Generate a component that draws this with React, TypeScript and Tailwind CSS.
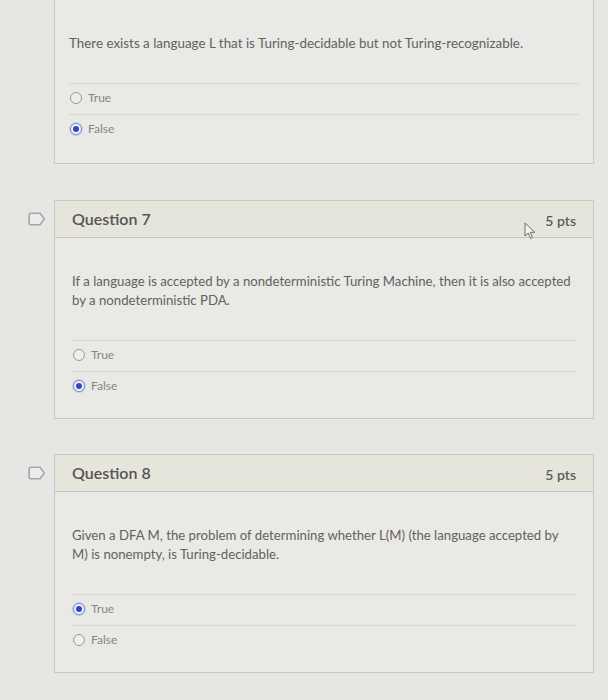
import React from "react";

function Radio({ checked }: { checked: boolean }) {
  return checked ? (
    <span className="inline-flex h-[12px] w-[12px] items-center justify-center rounded-full border border-[#7d8fd6] bg-[#f2f3f5] shadow-[0_0_0_1px_rgba(90,120,220,0.25)]">
      <span className="h-[6px] w-[6px] rounded-full bg-[#2b48c8]" />
    </span>
  ) : (
    <span className="inline-block h-[12px] w-[12px] rounded-full border border-[#9b9b9b] bg-[#eeeeec]" />
  );
}

function Option({ label, checked }: { label: string; checked: boolean }) {
  return (
    <div className="flex h-[31px] items-start border-t border-[#d6d6d3] pt-[7px]">
      <div className="flex items-center gap-[6px] pl-[1px]">
        <Radio checked={checked} />
        <span className="text-[12px] leading-[14px] text-[#878785]">{label}</span>
      </div>
    </div>
  );
}

function Flag() {
  return (
    <svg width="18" height="14" viewBox="0 0 18 14" fill="none">
      <path
        d="M3 1.2 H12 L16.4 7 L12 12.8 H3 Q1.2 12.8 1.2 11 V3 Q1.2 1.2 3 1.2 Z"
        stroke="#a6a6a4"
        strokeWidth="1.6"
        strokeLinejoin="round"
        fill="#ececea"
      />
    </svg>
  );
}

function Question({
  num,
  text,
  options,
  cursor,
}: {
  num: number;
  text: React.ReactNode;
  options: { label: string; checked: boolean }[];
  cursor?: boolean;
}) {
  return (
    <div className="flex items-start">
      <div className="mr-[8px] flex h-[37px] w-[18px] items-center">
        <Flag />
      </div>
      <div className="mr-[14px] flex-1 border border-[#c7c7c4] bg-[#e9e9e6]">
        <div className="relative flex h-[37px] items-center justify-between border-b border-[#c7c7c4] bg-[#e5e5dc] pl-[17px] pr-[17px]">
          <span className="text-[16px] font-semibold text-[#555553]">Question {num}</span>
          <span className="mt-[3px] text-[14px] font-semibold text-[#5b5b59]">5 pts</span>
          {cursor && (
            <svg
              className="absolute left-[469px] top-[21px]"
              width="13"
              height="18"
              viewBox="0 0 13 18"
            >
              <path
                d="M1 1 L1 14 L4.2 11 L6.6 16.5 L8.6 15.6 L6.3 10.3 L10.8 10.3 Z"
                fill="#f4f4f2"
                stroke="#6d6d6b"
                strokeWidth="1"
                strokeLinejoin="round"
              />
            </svg>
          )}
        </div>
        <div className="px-[17px] pb-[16px] pt-[34px]">
          <p className="mb-[30px] text-[13.2px] leading-[19px] text-[#626260]">{text}</p>
          {options.map((o) => (
            <Option key={o.label} label={o.label} checked={o.checked} />
          ))}
        </div>
      </div>
    </div>
  );
}

export default function App() {
  return (
    <div
      className="min-h-[700px] w-[608px] overflow-hidden bg-[#e6e6e3] pl-[28px]"
      style={{ fontFamily: "Lato, 'Open Sans', sans-serif" }}
    >
      <div className="flex items-start">
        <div className="mr-[8px] w-[18px]" />
        <div className="mr-[14px] flex-1 border border-t-0 border-[#c7c7c4] bg-[#e9e9e6]">
          <div className="px-[14px] pb-[18px] pt-[34px]">
            <p className="mb-[30px] text-[13.4px] leading-[19px] text-[#626260]">
              There exists a language L that is Turing-decidable but not Turing-recognizable.
            </p>
            <Option label="True" checked={false} />
            <Option label="False" checked={true} />
          </div>
        </div>
      </div>
      <div className="mt-[36px] flex flex-col gap-[35px]">
        <Question
          num={7}
          cursor
          text={
            <>
              If a language is accepted by a nondeterministic Turing Machine, then it is also accepted
              <br />
              by a nondeterministic PDA.
            </>
          }
          options={[
            { label: "True", checked: false },
            { label: "False", checked: true },
          ]}
        />
        <Question
          num={8}
          text={
            <>
              Given a DFA M, the problem of determining whether L(M) (the language accepted by
              <br />
              M) is nonempty, is Turing-decidable.
            </>
          }
          options={[
            { label: "True", checked: true },
            { label: "False", checked: false },
          ]}
        />
      </div>
    </div>
  );
}
